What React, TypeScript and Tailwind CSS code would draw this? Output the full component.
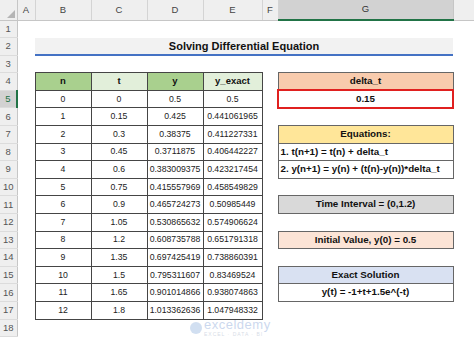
import React from "react";

const rows: [string, string, string, string][] = [
  ["0", "0", "0.5", "0.5"],
  ["1", "0.15", "0.425", "0.441061965"],
  ["2", "0.3", "0.38375", "0.411227331"],
  ["3", "0.45", "0.3711875", "0.406442227"],
  ["4", "0.6", "0.383009375", "0.423217454"],
  ["5", "0.75", "0.415557969", "0.458549829"],
  ["6", "0.9", "0.465724273", "0.50985449"],
  ["7", "1.05", "0.530865632", "0.574906624"],
  ["8", "1.2", "0.608735788", "0.651791318"],
  ["9", "1.35", "0.697425419", "0.738860391"],
  ["10", "1.5", "0.795311607", "0.83469524"],
  ["11", "1.65", "0.901014866", "0.938074863"],
  ["12", "1.8", "1.013362636", "1.047948332"],
];

// right-hand boxes in column G, keyed by sheet row
const side: Record<number, { text: string; cls: string }> = {
  4: { text: "delta_t", cls: "bg-[#f8cbad] border border-[#666] text-center" },
  5: { text: "0.15", cls: "border-2 border-[#e0201f] text-center" },
  7: { text: "Equations:", cls: "bg-[#ffe699] border border-[#666] text-center" },
  8: { text: "1. t(n+1) = t(n) + delta_t", cls: "border border-[#666] text-left pl-[2px]" },
  9: { text: "2. y(n+1) = y(n) + (t(n)-y(n))*delta_t", cls: "border border-[#666] text-left pl-[2px]" },
  11: { text: "Time Interval = (0,1.2)", cls: "bg-[#d9d9d9] border border-[#666] text-center" },
  13: { text: "Initial Value, y(0) = 0.5", cls: "bg-[#fce4d6] border border-[#666] text-center" },
  15: { text: "Exact Solution", cls: "bg-[#d9e1f2] border border-[#666] text-center" },
  16: { text: "y(t) = -1+t+1.5e^(-t)", cls: "border border-[#666] text-center" },
};

const headBg = ["bg-[#a9d08e]", "bg-[#e2efda]", "bg-[#a9d08e]", "bg-[#e2efda]"];
const heads = ["n", "t", "y", "y_exact"];

function RowHead({ n }: { n: number }) {
  const sel = n === 5;
  return (
    <td
      className={
        "p-0 text-center text-[9.5px] border-b border-[#dcdcdc] " +
        (sel
          ? "bg-[#d2d2d2] text-[#217346] border-r-2 border-r-[#217346]"
          : "bg-[#efefef] text-[#555] border-r border-r-[#c6c6c6]")
      }
    >
      {n}
    </td>
  );
}

export default function App() {
  const sheetRows = Array.from({ length: 18 }, (_, i) => i + 1);
  const cell = "p-0 border border-[#454545] text-center";

  return (
    <div
      className="relative w-[474px] h-[339px] overflow-hidden bg-white text-[#111]"
      style={{ fontFamily: "'Liberation Sans', Arial, sans-serif" }}
    >
      <table className="table-fixed border-collapse w-[474px]">
        <colgroup>
          <col className="w-[17px]" />
          <col className="w-[18px]" />
          <col className="w-[56px]" />
          <col className="w-[56px]" />
          <col className="w-[56px]" />
          <col className="w-[59px]" />
          <col className="w-[16px]" />
          <col className="w-[175px]" />
          <col />
        </colgroup>
        <thead>
          <tr className="h-[20px]">
            <th className="p-0 bg-[#efefef] border-r border-b border-[#c6c6c6] relative">
              <svg className="absolute right-[2px] bottom-[2px]" width="8" height="8" viewBox="0 0 8 8">
                <polygon points="8,0 8,8 0,8" fill="#b5b5b5" />
              </svg>
            </th>
            {["A", "B", "C", "D", "E", "F"].map((c) => (
              <th
                key={c}
                className="p-0 bg-[#efefef] border-r border-r-[#d4d4d4] border-b border-b-[#c6c6c6] text-[9.5px] font-normal text-[#444]"
              >
                {c}
              </th>
            ))}
            <th className="p-0 bg-[#d2d2d2] border-r border-r-[#c6c6c6] border-b-2 border-b-[#217346] text-[9.5px] font-normal text-[#333]">
              G
            </th>
            <th className="p-0 bg-[#efefef] border-b border-b-[#c6c6c6]" />
          </tr>
        </thead>
        <tbody>
          {sheetRows.map((r) => {
            const s = side[r];
            const sideCell = s ? (
              <td className={"p-0 text-[9.8px] font-bold whitespace-nowrap overflow-hidden " + s.cls}>{s.text}</td>
            ) : (
              <td className="p-0" />
            );
            if (r === 2) {
              return (
                <tr key={r} className="h-[17.6px]">
                  <RowHead n={r} />
                  <td className="p-0" />
                  <td
                    colSpan={6}
                    className="p-0 bg-[#f2f2f2] border-b-2 border-b-[#4472c4] text-center text-[11px] font-bold"
                  >
                    Solving Differential Equation
                  </td>
                  <td className="p-0" />
                </tr>
              );
            }
            let tableCells: React.ReactNode = (
              <>
                <td className="p-0" />
                <td className="p-0" />
                <td className="p-0" />
                <td className="p-0" />
              </>
            );
            if (r === 4) {
              tableCells = heads.map((h, i) => (
                <td key={h} className={cell + " font-bold text-[9.5px] " + headBg[i]}>
                  {h}
                </td>
              ));
            } else if (r >= 5 && r <= 17) {
              tableCells = rows[r - 5].map((v, i) => (
                <td key={i} className={cell + " text-[8.7px] text-[#222] whitespace-nowrap"}>
                  {v}
                </td>
              ));
            }
            return (
              <tr key={r} className="h-[17.6px]">
                <RowHead n={r} />
                <td className="p-0" />
                {tableCells}
                <td className="p-0" />
                {sideCell}
                <td className="p-0" />
              </tr>
            );
          })}
        </tbody>
      </table>

      {/* watermark */}
      <div className="absolute left-[190px] top-[318px] flex items-center gap-[2px] opacity-40 pointer-events-none">
        <div className="w-[12px] h-[12px] rounded-full bg-[#8fb0de]" />
        <div className="flex flex-col leading-none">
          <span className="text-[13px] text-[#7f9fd6] tracking-[0.5px]">exceldemy</span>
          <span className="text-[5px] text-[#9aa9c2] tracking-[1px] mt-[1px]">EXCEL · DATA · BI</span>
        </div>
      </div>
    </div>
  );
}
